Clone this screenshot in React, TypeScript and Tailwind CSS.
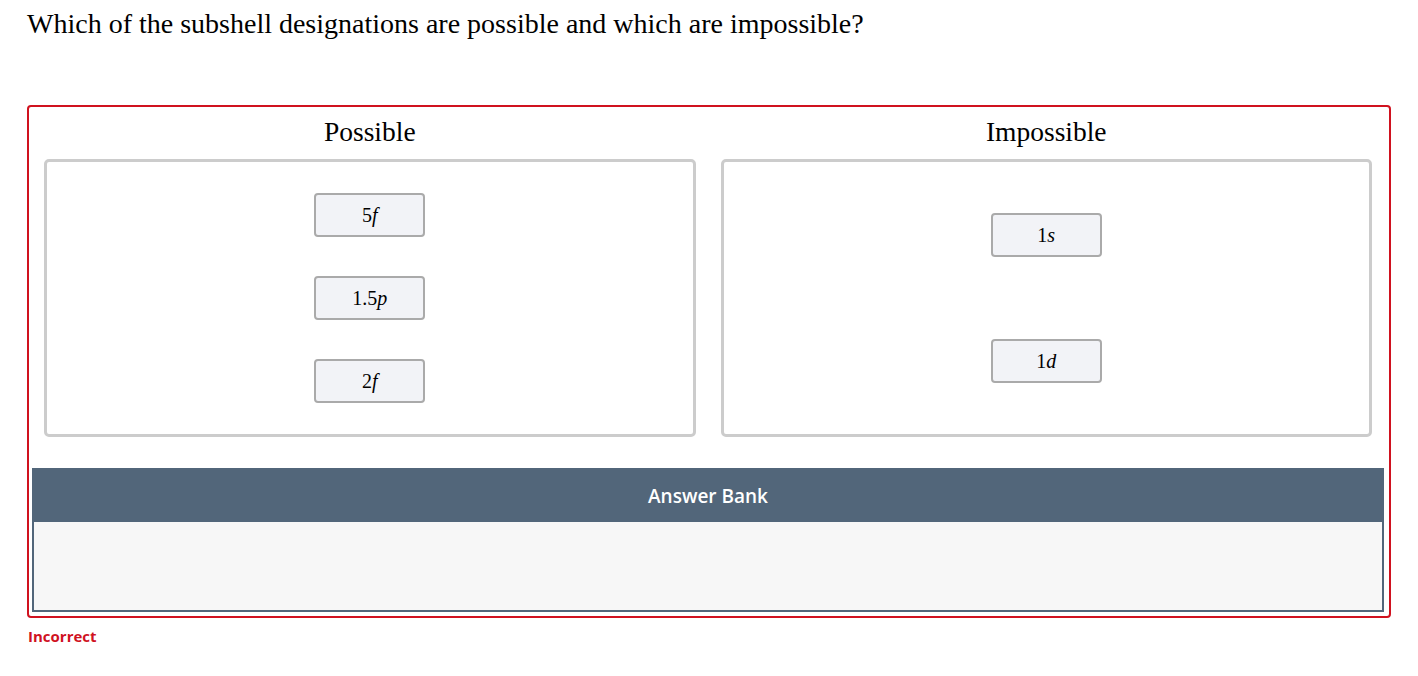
import React from "react";

const serif = { fontFamily: '"Liberation Serif", "Times New Roman", serif' };

function Tile({ num, letter }: { num: string; letter: string }) {
  return (
    <div
      className="w-[111px] h-[44px] flex items-center justify-center rounded-[4px] border-2 border-[#aaaaaa] bg-[#f2f3f7] text-[20px] text-black"
      style={serif}
    >
      <span>
        {num}
        <i>{letter}</i>
      </span>
    </div>
  );
}

export default function App() {
  return (
    <div className="w-[1418px] h-[676px] bg-white relative">
      <div className="pl-[27px] pt-[6px] text-[28px] leading-[36px] text-black" style={serif}>
        Which of the subshell designations are possible and which are impossible?
      </div>
      <div className="ml-[27px] mt-[63px] w-[1364px] h-[513px] border-2 border-[#d0121f] rounded-[4px] flex flex-col">
        <div className="flex pl-[15px] pr-[17px] gap-[25px]">
          <div className="flex-1 flex flex-col">
            <div className="h-[52px] flex items-center justify-center text-[27.5px] text-black pb-[3px]" style={serif}>
              Possible
            </div>
            <div className="h-[278px] border-[3px] border-[#cccccc] rounded-[5px] flex flex-col items-center justify-center gap-[39px]">
              <Tile num="5" letter="f" />
              <Tile num="1.5" letter="p" />
              <Tile num="2" letter="f" />
            </div>
          </div>
          <div className="flex-1 flex flex-col">
            <div className="h-[52px] flex items-center justify-center text-[27.5px] text-black pb-[3px]" style={serif}>
              Impossible
            </div>
            <div className="h-[278px] border-[3px] border-[#cccccc] rounded-[5px] flex flex-col items-center justify-center gap-[82px]">
              <Tile num="1" letter="s" />
              <Tile num="1" letter="d" />
            </div>
          </div>
        </div>
        <div className="mt-[31px] ml-[3px] mr-[5px] flex flex-col">
          <div
            className="h-[54px] bg-[#52667a] flex items-center justify-center text-white text-[19px] font-semibold pt-[2px]"
            style={{ fontFamily: '"Open Sans", sans-serif' }}
          >
            Answer Bank
          </div>
          <div className="h-[90px] bg-[#f7f7f7] border-2 border-t-0 border-[#52667a]"></div>
        </div>
      </div>
      <div
        className="pl-[28px] pt-[7px] text-[15px] font-bold text-[#d0121f]"
        style={{ fontFamily: '"Open Sans", sans-serif' }}
      >
        Incorrect
      </div>
    </div>
  );
}
